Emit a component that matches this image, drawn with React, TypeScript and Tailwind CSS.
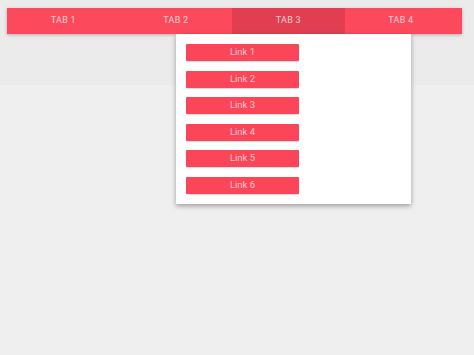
import React from "react"

const tabs = ["TAB 1", "TAB 2", "TAB 3", "TAB 4"]
const links = ["Link 1", "Link 2", "Link 3", "Link 4", "Link 5", "Link 6"]

export default function App() {
  return (
    <div className="relative w-[474px] h-[355px] overflow-hidden bg-[#efefef] font-['Roboto','Liberation_Sans',sans-serif]">
      {/* Header band */}
      <div className="h-[85px] bg-[#ebebeb] pt-[8px] pl-[7px] pr-[12px]">
        <nav className="flex h-[26px] bg-[#fc4a5c] shadow-[0_1px_3px_rgba(0,0,0,0.25)]">
          {tabs.map((t, i) => (
            <div
              key={t}
              className={`w-[112.5px] flex-none flex items-center justify-center text-[9px] tracking-[0.2px] text-white/75 ${i === 2 ? "bg-[#e13f51]" : ""}`}
            >
              {t}
            </div>
          ))}
        </nav>
      </div>

      {/* Dropdown */}
      <div className="absolute left-[176px] top-[34px] w-[235px] bg-white pt-[10px] px-[10px] pb-[10px] shadow-[0_2px_5px_rgba(0,0,0,0.35)]">
        <div className="flex flex-col gap-[9.5px]">
          {links.map((l) => (
            <div
              key={l}
              className="w-[113px] h-[17px] flex items-center justify-center bg-[#fb4659] rounded-[1px] text-[9.5px] text-white/70 shadow-[0_1px_1px_rgba(0,0,0,0.15)]"
            >
              {l}
            </div>
          ))}
        </div>
      </div>
    </div>
  )
}
